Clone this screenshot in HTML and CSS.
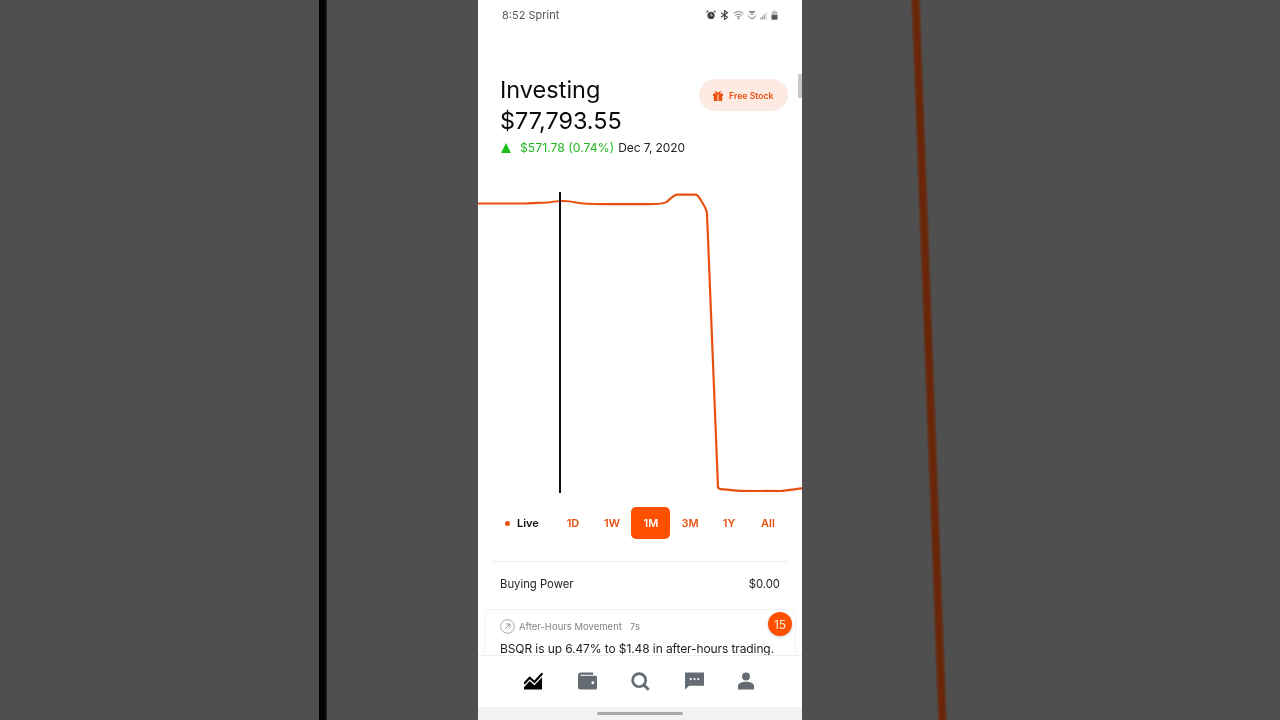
FILE: index.html
```html
<!DOCTYPE html>
<html lang="en">
<head>
<meta charset="utf-8">
<title>Investing</title>
<link rel="stylesheet" href="styles.css">
</head>
<body>
<div class="stage">
  <div class="side side-left"><div class="strip-black"></div></div>
  <main class="phone">
    <div class="status">
      <span class="status-text">8:52 Sprint</span>
      <div class="status-icons">
        <svg width="10" height="10" viewBox="0 0 10 10"><circle cx="5" cy="5.4" r="3.6" fill="#444"/><path d="M0.4 2.4 2.2 0.6M9.6 2.4 7.8 0.6" stroke="#444" stroke-width="1.2"/><path d="M5 3.4V5.6H6.6" stroke="#ddd" stroke-width=".8" fill="none"/></svg>
        <svg width="9" height="10" viewBox="0 0 9 10"><path d="M1 2.8 7.6 7.2 4.6 9.4V.6L7.6 2.8 1 7.2" stroke="#444" stroke-width="1.1" fill="none"/></svg>
        <svg width="11" height="10" viewBox="0 0 11 10"><path d="M.6 3.6C3.4 1 7.6 1 10.4 3.6M2.2 5.4C4 3.8 7 3.8 8.8 5.4M3.8 7C4.8 6.2 6.2 6.2 7.2 7" stroke="#666" stroke-width=".9" fill="none"/><circle cx="5.5" cy="8.4" r=".9" fill="#666"/></svg>
        <svg width="8" height="10" viewBox="0 0 10 11"><path d="M1 1.4H9M2.4 3.2C4 2.2 6 2.2 7.6 3.2M3.8 4.8C4.5 4.4 5.5 4.4 6.2 4.8M.8 6.2C1 8.6 3 10 5 10S8.8 8.8 9.2 6.2" stroke="#555" stroke-width="1" fill="none"/></svg>
        <svg width="7" height="9" viewBox="0 0 8 9"><path d="M.8 9V7M2.8 9V5.4M4.8 9V3.4" stroke="#777" stroke-width="1"/><path d="M6.9 9V1" stroke="#bbb" stroke-width="1"/></svg>
        <svg width="7" height="10" viewBox="0 0 7 10"><path d="M2.4 .4H4.6V1.4H6.4V9.6H.6V1.4H2.4Z" fill="#bbb"/><rect x=".6" y="5" width="5.8" height="4.6" fill="#555"/></svg>
      </div>
    </div>

    <header class="head">
      <div class="head-text">
        <h1 class="title">Investing</h1>
        <div class="value">$77,793.55</div>
        <div class="change">
          <span class="triangle"></span>
          <span class="gain">$571.78 (0.74%)</span>
          <span class="date">Dec 7, 2020</span>
        </div>
      </div>
      <div class="promo">
        <svg width="10" height="10" viewBox="0 0 10 10"><path d="M0 2.4H3.4L1.8.9 2.7 0 5 1.8 7.3 0 8.2.9 6.6 2.4H10V5H9.2V10H5.5V3.4H4.5V10H.8V5H0Z" fill="#e8500f"/></svg>
        <span>Free Stock</span>
      </div>
      <div class="scroll-tick"></div>
    </header>

    <div class="chart">
      <svg class="chart-svg" width="324" height="302" viewBox="0 0 324 302">
        <path d="M0 11.5H48C53 11 60 11 70 10.5 78 9 90 8.5 98 10.5 105 12 115 12.2 125 12.2H170C178 12.2 186 12 188.5 10 193 6 196 3 199 2.6H218C220 3 221 5 223 8.5 226 13 228.5 17 229 21.5L240 295.5C241 297.5 243 297.3 246 297.4 252 297.6 256 298.8 262 298.8 275 299 290 299 302 299 310 298.6 318 297 324 296.4" fill="none" stroke="#e9500f" stroke-width="2.2"/>
        <rect x="81" y="0" width="2" height="301" fill="#111"/>
      </svg>
    </div>

    <nav class="ranges">
      <div class="range live"><span class="dot"></span>Live</div>
      <div class="range">1D</div>
      <div class="range">1W</div>
      <div class="range active">1M</div>
      <div class="range">3M</div>
      <div class="range">1Y</div>
      <div class="range">All</div>
    </nav>

    <div class="rows">
      <div class="power">
        <span>Buying Power</span>
        <span>$0.00</span>
      </div>
      <article class="card">
        <div class="card-meta">
          <svg width="15" height="15" viewBox="0 0 15 15"><circle cx="7.5" cy="7.5" r="6.8" fill="none" stroke="#a9a9a9" stroke-width="1"/><path d="M5 10 10 5M6 5H10V9" fill="none" stroke="#999" stroke-width="1"/></svg>
          <span class="card-source">After-Hours Movement</span>
          <span class="card-age">7s</span>
        </div>
        <p class="card-body">BSQR is up 6.47% to $1.48 in after-hours trading.</p>
        <span class="badge">15</span>
      </article>
    </div>

    <nav class="tabs">
      <svg width="19" height="18" viewBox="0 0 20 18"><path d="M0 12 6 5.5 11 10 19.5 .8" fill="none" stroke="#000" stroke-width="2.2"/><path d="M0 18V15.5L6 9 11 13.6 19 5V18Z" fill="#000"/></svg>
      <svg width="19" height="18" viewBox="0 0 20 18"><path d="M3 0H16V2.4H3C2 2.4 2 3.4 3 3.4H18.4C19.4 3.4 20 4 20 5V16C20 17.2 19.2 18 18 18H2.4C1 18 0 17 0 15.6V3C0 1.2 1.2 0 3 0Z" fill="#646b73"/><circle cx="15.6" cy="10.8" r="1.5" fill="#fff"/></svg>
      <svg width="19" height="19" viewBox="0 0 20 20"><circle cx="8.6" cy="8.6" r="6.9" fill="none" stroke="#646b73" stroke-width="2.8"/><path d="M13.6 13.6 18.6 18.6" stroke="#646b73" stroke-width="3"/></svg>
      <svg width="19" height="18" viewBox="0 0 20 18"><path d="M0 0H20V14H4.4L0 18Z" fill="#646b73"/><circle cx="6" cy="7" r="1.1" fill="#fff"/><circle cx="10" cy="7" r="1.1" fill="#fff"/><circle cx="14" cy="7" r="1.1" fill="#fff"/></svg>
      <svg width="16" height="18" viewBox="0 0 17 18"><circle cx="8.5" cy="4.2" r="4.2" fill="#646b73"/><path d="M0 18V14.4C0 11.4 4 9.8 8.5 9.8S17 11.4 17 14.4V18Z" fill="#646b73"/></svg>
    </nav>
    <div class="home"><span class="home-bar"></span></div>
  </main>
  <div class="side side-right"><div class="strip-brown"></div></div>
</div>
</body>
</html>
```

FILE: styles.css
```css
* { box-sizing: border-box; }
html, body { margin: 0; height: 100%; }
body { font-family: Inter, "Liberation Sans", sans-serif; background: #4f4f4f; overflow: hidden; }
.stage { display: flex; width: 1280px; height: 720px; }
.side { flex: 1; position: relative; background: #4f4f4f; overflow: hidden; }
.strip-black { position: absolute; left: 319px; top: 0; width: 8px; height: 720px; background: linear-gradient(90deg, #000, #000 70%, #222); }
.strip-brown {
  position: absolute; left: 122px; top: -10px; width: 10px; height: 740px;
  background: linear-gradient(90deg, #55473f, #6b2508 30%, #6b2508 70%, #55473f);
  transform: rotate(-2.13deg);
}
.phone { width: 324px; height: 720px; background: #fff; display: flex; flex-direction: column; position: relative; overflow: hidden; flex: none; filter: blur(0.3px); }

.status { height: 30px; padding: 8px 24px 0; display: flex; justify-content: space-between; align-items: flex-start; }
.status-text { font-size: 11px; line-height: 14px; color: #555; }
.status-icons { display: flex; align-items: center; gap: 4px; margin-top: 2px; }

.head { height: 133px; padding: 17px 14px 0 22px; display: flex; justify-content: space-between; align-items: flex-start; position: relative; }
.title { margin: 27px 0 0; font-size: 23.5px; line-height: 31px; font-weight: 400; color: #0b0b0b; }
.value { font-size: 23.4px; line-height: 31px; color: #0b0b0b; }
.change { display: flex; align-items: center; line-height: 20px; margin-top: 2px; }
.triangle { width: 0; height: 0; border-left: 5.5px solid transparent; border-right: 5.5px solid transparent; border-bottom: 10px solid #1ec01a; margin: 0 9px 0 1px; }
.gain { color: #23b823; margin-right: 4px; font-size: 12.25px; }
.date { color: #222; font-size: 12px; letter-spacing: -0.1px; }
.promo { width: 89px; height: 32px; margin-top: 32px; border-radius: 16px; background: #fdebe3; display: flex; align-items: center; gap: 6px; padding: 1px 0 0 14px; font-size: 8.7px; font-weight: 600; color: #e8500f; white-space: nowrap; }
.scroll-tick { position: absolute; right: 0; top: 44px; width: 4px; height: 24px; background: #c9c9c9; }

.chart { height: 311px; padding-top: 29px; }
.chart-svg { display: block; }

.ranges { height: 32px; margin-top: 33px; padding: 0 14px; display: flex; align-items: stretch; }
.range { flex: 0 0 39px; display: flex; align-items: center; justify-content: center; padding-left: 2px; font-size: 11px; font-weight: 600; color: #e8500f; border-radius: 5px; }
.range.live { flex: 0 0 60.5px; justify-content: flex-start; padding-left: 13px; color: #111; gap: 7px; }
.range.active { background: #ff5000; color: #fff; }
.dot { width: 5px; height: 5px; border-radius: 50%; background: #e8500f; }

.rows { flex: 1; margin-top: 22px; padding: 0 6px; min-height: 0; overflow: hidden; }
.power { margin: 0 8px; height: 48px; border-top: 1px solid #ececec; display: flex; justify-content: space-between; align-items: center; padding: 0 8px 4px; font-size: 11.3px; color: #222; }
.card { position: relative; height: 60px; border: 1px solid #f1f1f1; border-bottom: 0; border-radius: 7px 7px 0 0; padding: 9px 14px 9px 15px; }
.card-meta { display: flex; align-items: center; gap: 4px; font-size: 9.5px; color: #80868c; }
.card-age { margin-left: 4px; }
.card-body { margin: 7px 0 0; font-size: 12px; letter-spacing: -0.1px; line-height: 16px; color: #222; white-space: nowrap; }
.badge { position: absolute; right: 3px; top: 2px; width: 24px; height: 24px; border-radius: 50%; background: #ff5000; color: #fdebe3; font-size: 12px; display: flex; align-items: center; justify-content: center; box-shadow: 0 1px 3px rgba(0,0,0,.2); }

.tabs { height: 52px; background: #fff; border-top: 1px solid #eee; padding: 16px 48px 0 46px; display: flex; justify-content: space-between; align-items: flex-start; position: relative; flex: none; }
.home { height: 13px; background: #f2f2f2; display: flex; justify-content: center; align-items: center; flex: none; }
.home-bar { width: 86px; height: 3px; border-radius: 2px; background: #a8a8a8; }
```
